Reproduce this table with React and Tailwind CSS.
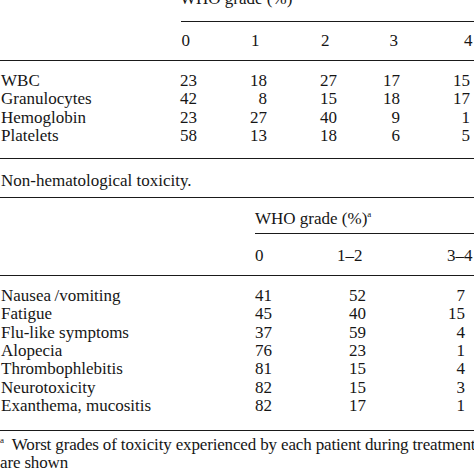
const hemRows = [
  ["WBC", "23", "18", "27", "17", "15"],
  ["Granulocytes", "42", "8", "15", "18", "17"],
  ["Hemoglobin", "23", "27", "40", "9", "1"],
  ["Platelets", "58", "13", "18", "6", "5"],
];

const nonHemRows = [
  ["Nausea\u2009/vomiting", "41", "52", "7"],
  ["Fatigue", "45", "40", "15"],
  ["Flu-like symptoms", "37", "59", "4"],
  ["Alopecia", "76", "23", "1"],
  ["Thrombophlebitis", "81", "15", "4"],
  ["Neurotoxicity", "82", "15", "3"],
  ["Exanthema, mucositis", "82", "17", "1"],
];

const Rule = ({ className = "" }) => (
  <div className={`h-px bg-[#1a1a1a] ${className}`} />
);

const App = () => {
  return (
    <div className="w-[474px] h-[474px] overflow-hidden bg-white text-[#161616] text-[17px] font-['Liberation_Serif','Times_New_Roman',serif]">
      {/* hematological table */}
      <div className="ml-[180px] -mt-[10px] leading-[18px] whitespace-nowrap">
        WHO grade (%)<sup className="text-[9px] -top-[7px]">a</sup>
      </div>
      <Rule className="ml-[181px] mt-[13px]" />
      <div className="flex mt-[10px] leading-[18px]">
        <span className="w-[190px] text-right">0</span>
        <span className="w-[69.5px] text-right">1</span>
        <span className="w-[70px] text-right">2</span>
        <span className="w-[68.5px] text-right">3</span>
        <span className="w-[74.5px] text-right">4</span>
      </div>
      <Rule className="mt-[10px]" />
      <div className="mt-[11px] leading-[18.3px]">
        {hemRows.map((row) => (
          <div key={row[0]} className="flex">
            <span className="w-[157px] pl-[1px]">{row[0]}</span>
            <span className="w-[40px] text-right">{row[1]}</span>
            <span className="w-[70px] text-right">{row[2]}</span>
            <span className="w-[70px] text-right">{row[3]}</span>
            <span className="w-[63px] text-right">{row[4]}</span>
            <span className="w-[70px] text-right">{row[5]}</span>
          </div>
        ))}
      </div>
      <Rule className="mt-[12.5px]" />

      {/* non-hematological table */}
      <div className="mt-[13px] leading-[18px] pl-[1px]">Non-hematological toxicity.</div>
      <Rule className="mt-[7px]" />
      <div className="ml-[255px] mt-[12px] leading-[18px] whitespace-nowrap">
        WHO grade (%)<sup className="text-[9px] -top-[7px]">a</sup>
      </div>
      <Rule className="ml-[255px] mt-[5px]" />
      <div className="flex mt-[13px] leading-[18px]">
        <span className="w-[255px]" />
        <span className="w-[82px]">0</span>
        <span className="w-[110px]">1–2</span>
        <span className="w-[27px]">3–4</span>
      </div>
      <Rule className="mt-[10px]" />
      <div className="mt-[11px] leading-[18.4px]">
        {nonHemRows.map((row) => (
          <div key={row[0]} className="flex">
            <span className="w-[230px] pl-[1px]">{row[0]}</span>
            <span className="w-[42px] text-right">{row[1]}</span>
            <span className="w-[94px] text-right">{row[2]}</span>
            <span className="w-[99px] text-right">{row[3]}</span>
          </div>
        ))}
      </div>
      <Rule className="mt-[14px]" />
      <div className="mt-[5px] leading-[18.5px] whitespace-nowrap tracking-[-0.15px]">
        <sup className="text-[9px] -top-[7px]">a</sup>&nbsp; Worst grades of toxicity experienced by each patient during treatment
        <br />
        are shown
      </div>
    </div>
  );
};

export default App;
